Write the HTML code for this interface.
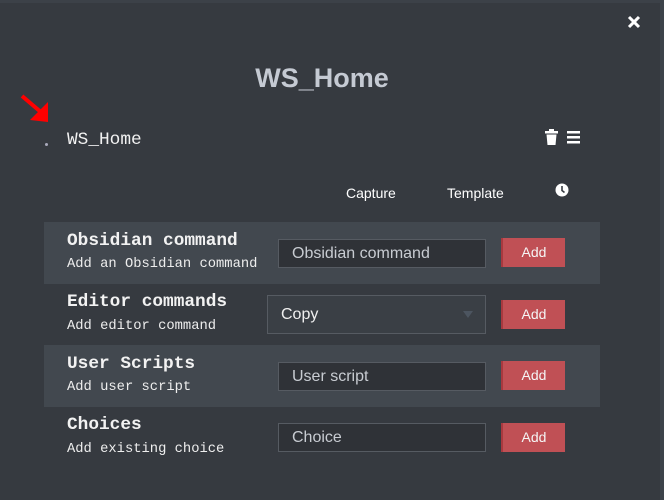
<!DOCTYPE html>
<html><head><style>
*{margin:0;padding:0;box-sizing:border-box}
body{width:664px;height:500px;background:#363a40;position:relative;overflow:hidden;font-family:"Liberation Sans",sans-serif;color:#fff}
.a{position:absolute}
.mono{font-family:"Liberation Mono",monospace}
.row{position:absolute;left:44px;width:556px;height:62px}
.hl{background:#42484f}
.t{position:absolute;left:23px;font-family:"Liberation Mono",monospace;font-weight:bold;font-size:17.8px;color:#f2f2f2}
.s{position:absolute;left:23px;font-family:"Liberation Mono",monospace;font-size:13.8px;color:#eee}
.in{position:absolute;left:234px;width:208px;height:29px;background:#2f3237;border:1px solid #565b62;font-size:16px;color:#c8ccd2;padding:5px 0 0 13px}
.btn{position:absolute;left:457px;width:64px;height:29px;background:#c05055;border-left:2px solid #a8393f;font-size:14px;color:#f5f5f5;text-align:center;line-height:29px}
</style></head><body>
<div class="a" style="left:0;top:0;width:664px;height:3px;background:#3c4148"></div>
<div class="a" style="top:0;width:4px;height:500px;background:#3d434a;left:660px"></div>
<svg class="a" style="left:627px;top:15px" width="14" height="14"><path d="M2 2L12 12M12 2L2 12" stroke="#fff" stroke-width="3"/></svg>
<div class="a" style="left:-10px;top:63px;width:664px;text-align:center;font-size:27px;font-weight:bold;color:#c5cad3">WS_Home</div>
<svg class="a" style="left:18px;top:92px" width="32" height="34"><path d="M4 4L24 21" stroke="#f00" stroke-width="4"/><path d="M12 28L30 10L30 30Z" fill="#f00"/></svg>
<div class="a" style="left:45px;top:143px;width:3px;height:3px;background:#aab;border-radius:50%"></div>
<div class="a mono" style="left:67px;top:130px;font-size:17.8px;color:#f2f2f2">WS_Home</div>
<svg class="a" style="left:544px;top:129px" width="40" height="18"><rect x="1" y="2" width="13" height="2.5" fill="#fff"/><rect x="5" y="0" width="5" height="2" fill="#fff"/><path d="M2.5 5.5H12.5L11.5 16H3.5Z" fill="#fff"/><rect x="23" y="2" width="13" height="2.5" fill="#fff"/><rect x="23" y="7" width="13" height="2.5" fill="#fff"/><rect x="23" y="12" width="13" height="2.5" fill="#fff"/></svg>
<div class="a" style="left:346px;top:185px;font-size:14px">Capture</div>
<div class="a" style="left:447px;top:185px;font-size:14px">Template</div>
<svg class="a" style="left:555px;top:183px" width="14" height="14"><circle cx="7" cy="7" r="6.5" fill="#fff"/><path d="M7 3V7.5L9.5 9.5" stroke="#363a40" stroke-width="1.6" fill="none"/></svg>
<div class="row hl" style="top:222px"><div class="t" style="top:9px">Obsidian command</div><div class="s" style="top:35px">Add an Obsidian command</div><div class="in" style="top:17px">Obsidian command</div><div class="btn" style="top:16px">Add</div></div>
<div class="row" style="top:284px"><div class="t" style="top:8px">Editor commands</div><div class="s" style="top:35px">Add editor command</div><div class="in" style="left:223px;width:219px;height:39px;top:11px;background:#3a3f45;padding-top:10px;color:#f0f0f0">Copy<svg style="position:absolute;right:12px;top:15px" width="10" height="7"><path d="M0 0H10L5 7Z" fill="#4c5560"/></svg></div><div class="btn" style="top:16px">Add</div></div>
<div class="row hl" style="top:345px"><div class="t" style="top:9px">User Scripts</div><div class="s" style="top:35px">Add user script</div><div class="in" style="top:17px">User script</div><div class="btn" style="top:16px">Add</div></div>
<div class="row" style="top:407px"><div class="t" style="top:8px">Choices</div><div class="s" style="top:35px">Add existing choice</div><div class="in" style="top:16px">Choice</div><div class="btn" style="top:16px">Add</div></div>
</body></html>
